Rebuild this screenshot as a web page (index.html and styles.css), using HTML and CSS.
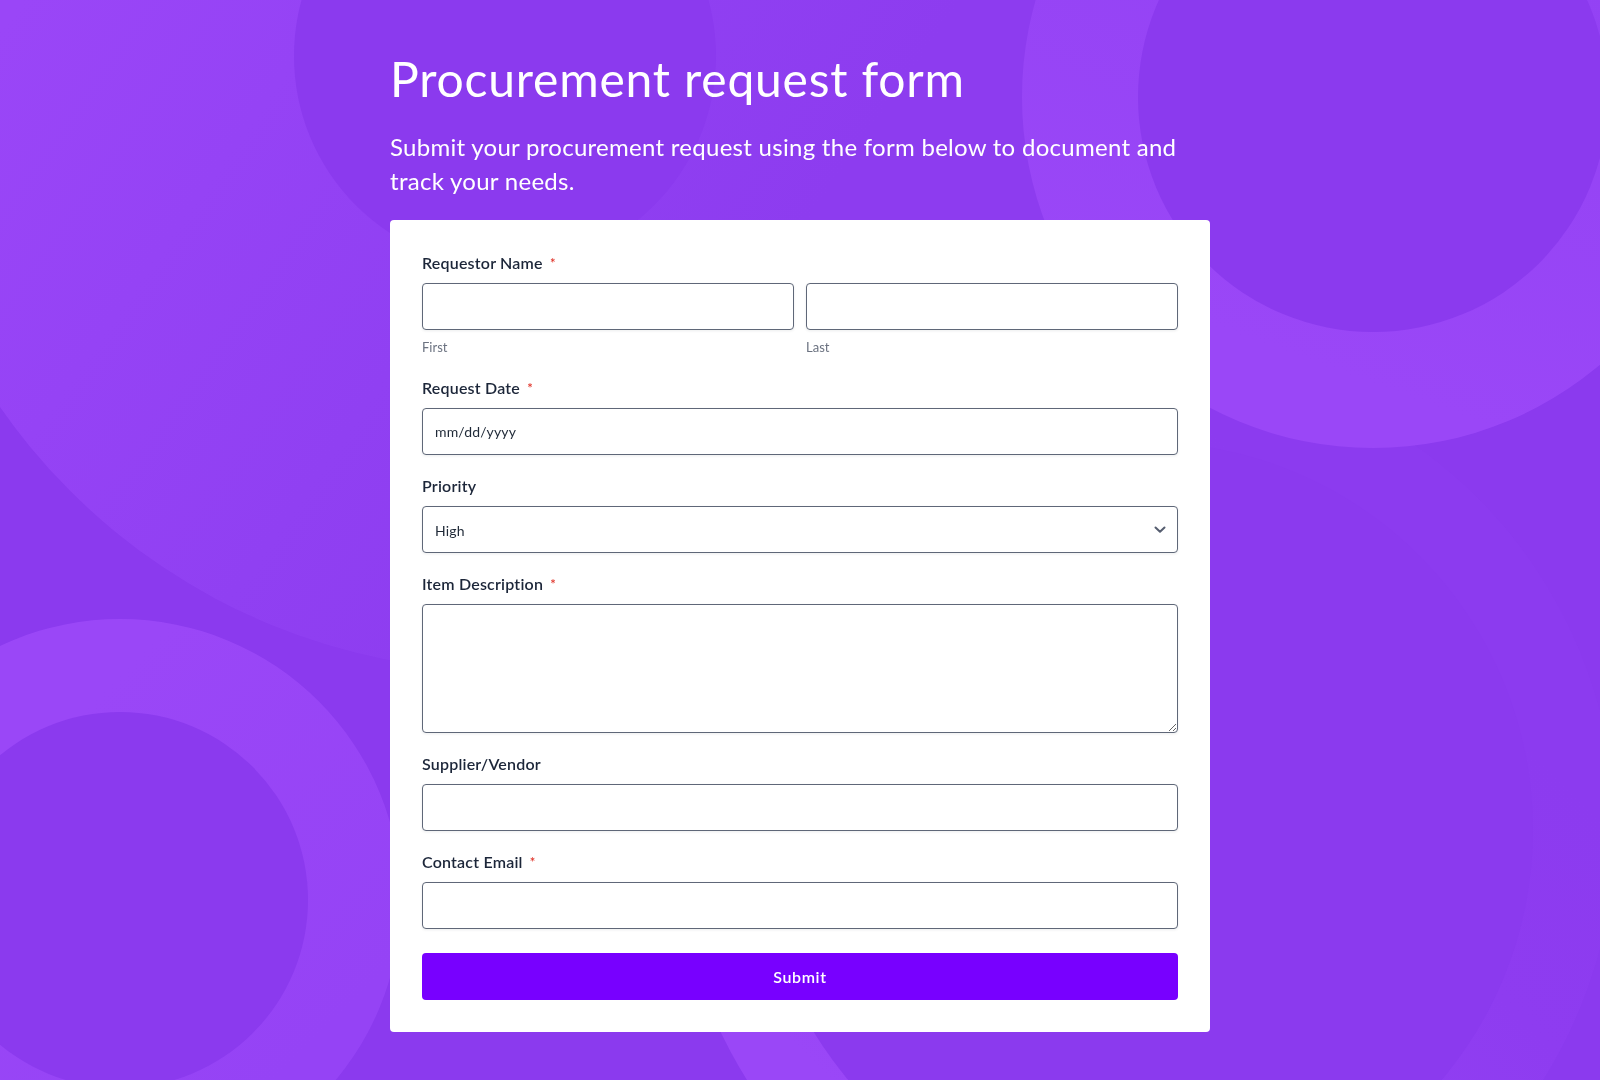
FILE: index.html
```html
<!DOCTYPE html>
<html lang="en">
<head>
<meta charset="utf-8">
<title>Procurement request form</title>
<link rel="stylesheet" href="styles.css">
</head>
<body>
<div class="backdrop" aria-hidden="true">
  <div class="shape br-ring"></div>
  <div class="shape br-core"></div>
  <div class="shape tl-ring"></div>
  <div class="shape tl-core"></div>
  <div class="shape tr-ring"></div>
  <div class="shape tr-core"></div>
  <div class="shape bl-ring"></div>
  <div class="shape bl-core"></div>
</div>
<main class="page">
  <header class="intro">
    <h1 class="title">Procurement request form</h1>
    <p class="subtitle">Submit your procurement request using the form below to document and track your needs.</p>
  </header>
  <form class="card">
    <div class="field">
      <label class="label">Requestor Name <span class="req">*</span></label>
      <div class="name-row">
        <div class="sub">
          <input class="input" type="text">
          <span class="hint">First</span>
        </div>
        <div class="sub">
          <input class="input" type="text">
          <span class="hint">Last</span>
        </div>
      </div>
    </div>
    <div class="field">
      <label class="label">Request Date <span class="req">*</span></label>
      <input class="input" type="text" placeholder="mm/dd/yyyy">
    </div>
    <div class="field">
      <label class="label">Priority</label>
      <div class="select-wrap">
        <select class="input select">
          <option>High</option>
          <option>Medium</option>
          <option>Low</option>
        </select>
        <svg class="chevron" width="12" height="8" viewBox="0 0 12 8"><path d="M1.5 1.5 L6 5.8 L10.5 1.5" fill="none" stroke="#555d6f" stroke-width="2" stroke-linecap="round" stroke-linejoin="round"/></svg>
      </div>
    </div>
    <div class="field">
      <label class="label">Item Description <span class="req">*</span></label>
      <textarea class="input textarea"></textarea>
    </div>
    <div class="field">
      <label class="label">Supplier/Vendor</label>
      <input class="input" type="text">
    </div>
    <div class="field">
      <label class="label">Contact Email <span class="req">*</span></label>
      <input class="input" type="email">
    </div>
    <button class="submit" type="button">Submit</button>
  </form>
</main>
</body>
</html>
```

FILE: styles.css
```css
html, body {
  margin: 0;
  padding: 0;
  height: 100%;
  overflow: hidden;
}

body {
  background: #8b3aee;
  font-family: Lato, "Open Sans", "Liberation Sans", sans-serif;
  color: #1f2937;
}

.backdrop {
  position: fixed;
  inset: 0;
  overflow: hidden;
  z-index: 0;
}

.shape {
  position: absolute;
  border-radius: 50%;
}

.br-ring {
  left: 675px; top: 360px; width: 940px; height: 940px;
  background: linear-gradient(45deg, #9a47f7 20%, #9241f3 40%, #8e3cf0 60%, #8c3bef 75%);
}
.br-core {
  left: 757px; top: 442px; width: 776px; height: 776px;
  background: #8b3aee;
}

.tl-ring {
  left: -110px; top: -559px; width: 1230px; height: 1230px;
  background: linear-gradient(125deg, #9a46f7 25%, #9543f5 40%, #9040f2 55%, #8d3cef 70%);
}
.tl-core {
  left: 294px; top: -155px; width: 422px; height: 422px;
  background: #8b3aee;
}

.tr-ring {
  left: 1022px; top: -254px; width: 702px; height: 702px;
  background: linear-gradient(200deg, #9342f4 30%, #9a47f7 80%);
}
.tr-core {
  left: 1138px; top: -138px; width: 470px; height: 470px;
  background: #8b3aee;
}

.bl-ring {
  left: -161px; top: 619px; width: 562px; height: 562px;
  background: linear-gradient(135deg, #9a47f7 30%, #9543f5 80%);
}
.bl-core {
  left: -68px; top: 712px; width: 376px; height: 376px;
  background: #8b3aee;
}

.page {
  position: relative;
  z-index: 1;
  width: 820px;
  margin: 0 auto;
  padding-top: 50px;
}

.title {
  margin: 0;
  font-size: 48px;
  line-height: 58px;
  font-weight: 400;
  letter-spacing: 0.8px;
  color: #ffffff;
}

.subtitle {
  margin: 22px 0 22px;
  font-size: 24px;
  line-height: 34px;
  font-weight: 400;
  letter-spacing: 0.28px;
  color: #ffffff;
}

.card {
  background: #ffffff;
  border-radius: 4px;
  padding: 32px;
}

.field {
  margin-bottom: 20px;
}

.label {
  display: block;
  margin-bottom: 9px;
  font-size: 16px;
  line-height: 22px;
  font-weight: 600;
  letter-spacing: 0.2px;
  color: #1c2639;
}

.req {
  margin-left: 3px;
  font-size: 13px;
  color: #e0352b;
  vertical-align: 1px;
}

.name-row {
  display: grid;
  grid-template-columns: 1fr 1fr;
  gap: 12px;
}

.input {
  display: block;
  width: 100%;
  height: 47px;
  box-sizing: border-box;
  margin: 0;
  padding: 0 12px;
  border: 1px solid #5f6778;
  border-radius: 4px;
  background: #ffffff;
  box-shadow: 0 1px 3px rgba(16, 24, 40, 0.08);
  font-family: Lato, "Open Sans", "Liberation Sans", sans-serif;
  font-size: 14px;
  letter-spacing: 0.15px;
  color: #1f2937;
  outline: none;
}

.input::placeholder {
  color: #1f2937;
  opacity: 1;
}

.hint {
  display: block;
  margin-top: 8px;
  font-size: 13px;
  line-height: 19px;
  color: #6b7280;
}

.select-wrap {
  position: relative;
}

.select {
  appearance: none;
  -webkit-appearance: none;
  padding-top: 2px;
  padding-right: 36px;
}

.chevron {
  position: absolute;
  right: 12px;
  top: 20px;
  pointer-events: none;
}

.textarea {
  height: 129px;
  padding: 12px;
  resize: vertical;
}

.submit {
  display: block;
  width: 100%;
  height: 47px;
  margin-top: 24px;
  border: none;
  border-radius: 4px;
  background: #7800ff;
  color: #ffffff;
  font-family: Lato, "Open Sans", "Liberation Sans", sans-serif;
  font-size: 16px;
  font-weight: 600;
  letter-spacing: 0.6px;
  cursor: pointer;
}
```
